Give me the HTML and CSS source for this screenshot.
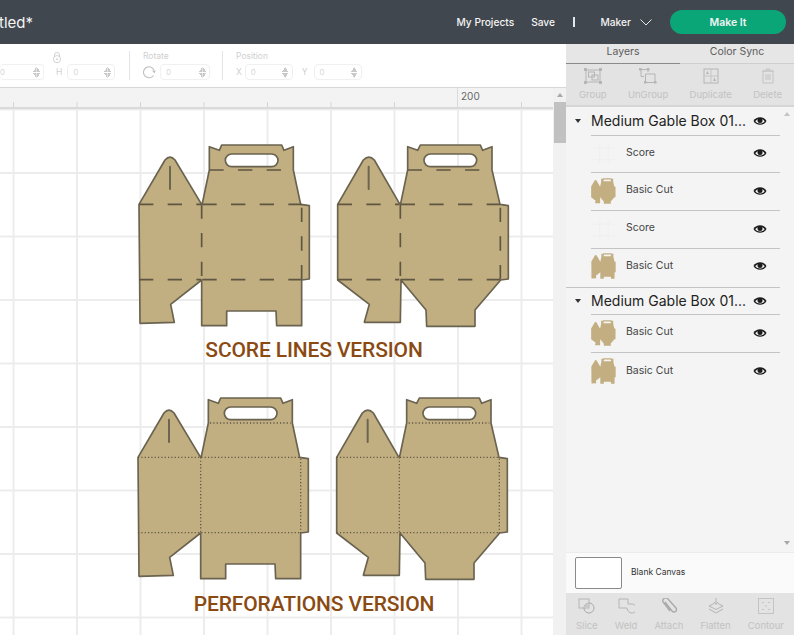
FILE: index.html
```html
<!DOCTYPE html>
<html lang="en">
<head>
<meta charset="utf-8">
<title>Untitled*</title>
<link rel="stylesheet" href="styles.css">
</head>
<body>
<svg class="defs" width="0" height="0" aria-hidden="true">
  <defs>
    <symbol id="flat" viewBox="0 0 570 600">
      <path fill-rule="evenodd" d="M27 208L105 75Q120 58 135 75L213 205L217 205L238 105L238 35L268 46L275 30L455 30L462 46L490 35L490 105L512 208L538 212L538 432L515 435L515 572L440 572L438 528L290 528L290 572L215 572L215 435L122 508L133 562L30 565ZM305 57L425 57A19 19 0 0 1 425 95L305 95A19 19 0 0 1 305 57Z"/>
    </symbol>
    <symbol id="hex" viewBox="0 0 570 600">
      <path fill-rule="evenodd" d="M23 208L100 75Q117 58 133 75L208 205L212 205L233 105L233 35L263 46L271 30L451 30L458 46L486 35L486 105L510 208L535 212L535 432L512 435L435 525L435 574L290 574L288 525L213 435L211 562L103 562L118 508L23 435ZM301 57L421 57A19 19 0 0 1 421 95L301 95A19 19 0 0 1 301 57Z"/>
    </symbol>
    <symbol id="eye" viewBox="0 0 14 12">
      <path d="M.5 6C3 1 11 1 13.500 6C11 11 3 11 .5 6Z" fill="#1d1d1d"/>
      <path d="M2.300 6.200C4.500 3.300 9.500 3.300 11.700 6.200C9.500 9.200 4.500 9.200 2.300 6.200Z" fill="#f4f4f4"/>
      <circle cx="7" cy="5.600" r="2.500" fill="#1d1d1d"/>
    </symbol>
    <symbol id="score" viewBox="0 0 26 26">
      <path d="M1 8H25M1 20H25M9 3V24M18 3V24" fill="none" stroke="#efefef"/>
    </symbol>
  </defs>
</svg>

<header class="topbar">
  <div class="title"><span>Untitled*</span></div>
  <nav class="nav">
    <a class="nav-link">My Projects</a>
    <a class="nav-link nav-save">Save</a>
    <span class="nav-sep"></span>
    <a class="nav-link nav-maker">Maker</a>
    <svg class="chevron" viewBox="0 0 12 7"><path d="M.5 .5L6 6L11.500 .5" fill="none" stroke="#e8e8e8" stroke-width="1"/></svg>
    <button class="make-it">Make It</button>
  </nav>
</header>

<div class="main">
  <section class="workspace">
    <div class="toolbar">
      <div class="tgroup tgroup-size">
        <div class="tlabel tlabel-lock">
          <svg class="lock" viewBox="0 0 12 14"><path d="M3 6V4A3 3 0 0 1 9 4V6" fill="none" stroke="#c9c9c9"/><circle cx="6" cy="9" r="4.300" fill="none" stroke="#c9c9c9"/><circle cx="6" cy="9" r="1" fill="#c9c9c9"/></svg>
        </div>
        <div class="trow">
          <div class="field field-w"><span class="val">0</span><span class="spin"></span></div>
          <span class="axis axis-h">H</span>
          <div class="field"><span class="val">0</span><span class="spin"></span></div>
        </div>
      </div>
      <div class="tgroup tgroup-rotate">
        <div class="tlabel">Rotate</div>
        <div class="trow">
          <svg class="rotate" viewBox="0 0 13 13"><path d="M10.500 9.500A5.500 5.500 0 1 1 11 4" fill="none" stroke="#bdbdbd" stroke-width="1.100"/><path d="M9 4.500L12.700 4.500L11.500 7.500Z" fill="#bdbdbd"/></svg>
          <div class="field field-rot"><span class="val">0</span><span class="spin"></span></div>
        </div>
      </div>
      <div class="tgroup tgroup-pos">
        <div class="tlabel">Position</div>
        <div class="trow">
          <span class="axis axis-x">X</span>
          <div class="field field-x"><span class="val">0</span><span class="spin"></span></div>
          <span class="axis axis-y">Y</span>
          <div class="field"><span class="val">0</span><span class="spin"></span></div>
        </div>
      </div>
    </div>
    <div class="stage">
      <div class="stage-main">
        <div class="ruler"><span class="ruler-mark">200</span></div>
        <div class="canvas">
          <div class="box box-a">
            <svg viewBox="0 0 570 600">
              <use href="#flat" class="outline" width="570" height="600"/>
              <path class="slit" d="M120 95V162"/>
              <path class="dash" d="M27 208H213M217 208H515M27 434H213M217 434H515M238 105H490"/>
              <path class="dash" d="M215 208V435M515 218V435"/>
            </svg>
          </div>
          <div class="box box-b">
            <svg viewBox="0 0 570 600">
              <use href="#hex" class="outline" width="570" height="600"/>
              <path class="slit" d="M116 95V162"/>
              <path class="dash" d="M23 208H208M212 208H510M23 434H208M212 434H510M233 105H486"/>
              <path class="dash" d="M211 208V435M511 218V435"/>
            </svg>
          </div>
          <p class="caption caption-score">SCORE LINES VERSION</p>
          <div class="box box-c">
            <svg viewBox="0 0 570 600">
              <use href="#flat" class="outline" width="570" height="600"/>
              <path class="slit" d="M120 95V162"/>
              <path class="dots" d="M27 208H515M27 434H515M243 105H485M215 208V435M515 212V435"/>
            </svg>
          </div>
          <div class="box box-d">
            <svg viewBox="0 0 570 600">
              <use href="#hex" class="outline" width="570" height="600"/>
              <path class="slit" d="M116 95V162"/>
              <path class="dots" d="M23 208H510M23 434H510M239 105H481M211 208V435M511 212V435"/>
            </svg>
          </div>
          <p class="caption caption-perf">PERFORATIONS VERSION</p>
        </div>
      </div>
      <div class="vscroll">
        <span class="arrow-up"></span>
        <span class="thumb"></span>
      </div>
    </div>
  </section>

  <aside class="panel">
    <div class="tabs">
      <div class="tab tab-active">Layers</div>
      <div class="tab">Color Sync</div>
    </div>
    <div class="tools tools-top">
      <div class="tool">
        <svg viewBox="0 0 18 16"><rect x="2" y="2" width="14" height="12" fill="none" stroke="#b5b5b5"/><rect x="4.500" y="4" width="6" height="5" fill="none" stroke="#b5b5b5"/><rect x="8" y="7" width="6" height="5" fill="none" stroke="#b5b5b5"/><path d="M0 0h3v3H0zM15 0h3v3h-3zM0 13h3v3H0zM15 13h3v3h-3z" fill="#b5b5b5"/></svg>
        <span>Group</span>
      </div>
      <div class="tool">
        <svg viewBox="0 0 18 16"><path d="M2 1.500H9V4M2 1.500V8.500H5M6.500 6H16V14.500H6.500Z" fill="none" stroke="#b5b5b5"/><path d="M0 0h2.500v2.500H0zM8 0h2.500v2.500H8zM15 13h2.500v2.500H15zM5 13h2.500v2.500H5z" fill="#b5b5b5"/></svg>
        <span>UnGroup</span>
      </div>
      <div class="tool">
        <svg viewBox="0 0 18 16"><rect x="2" y="1" width="14" height="14" fill="none" stroke="#b5b5b5"/><path d="M9 1V15M2 8H16" stroke="#c5c5c5"/><path d="M5.500 3L7 6L4 6ZM12.500 9.500L14 13L11 13Z" fill="#b5b5b5"/></svg>
        <span>Duplicate</span>
      </div>
      <div class="tool">
        <svg viewBox="0 0 18 16"><path d="M4 3H14V15H4ZM3 3H15M7 3V1H11V3M7 6V12M9 6V12M11 6V12" fill="none" stroke="#c4c4c4"/></svg>
        <span>Delete</span>
      </div>
    </div>

    <div class="layers">
      <div class="layers-list">
        <div class="group-row">
          <span class="caret"></span><span class="group-name">Medium Gable Box 01...</span>
          <svg class="eye"><use href="#eye"/></svg>
        </div>
        <div class="layer-row">
          <svg class="thumb-img"><use href="#score"/></svg><span class="layer-name">Score</span>
          <svg class="eye"><use href="#eye"/></svg>
        </div>
        <div class="layer-row layer-row-38">
          <svg class="thumb-img thumb-fill" viewBox="20 25 525 552" preserveAspectRatio="none"><use href="#hex" width="570" height="600"/></svg><span class="layer-name">Basic Cut</span>
          <svg class="eye"><use href="#eye"/></svg>
        </div>
        <div class="layer-row layer-row-38">
          <svg class="thumb-img"><use href="#score"/></svg><span class="layer-name">Score</span>
          <svg class="eye"><use href="#eye"/></svg>
        </div>
        <div class="layer-row layer-row-last">
          <svg class="thumb-img thumb-fill" viewBox="20 25 525 552" preserveAspectRatio="none"><use href="#flat" width="570" height="600"/></svg><span class="layer-name">Basic Cut</span>
          <svg class="eye"><use href="#eye"/></svg>
        </div>
        <div class="group-row group-row-2">
          <span class="caret"></span><span class="group-name">Medium Gable Box 01...</span>
          <svg class="eye"><use href="#eye"/></svg>
        </div>
        <div class="layer-row layer-row-38">
          <svg class="thumb-img thumb-fill" viewBox="20 25 525 552" preserveAspectRatio="none"><use href="#hex" width="570" height="600"/></svg><span class="layer-name">Basic Cut</span>
          <svg class="eye"><use href="#eye"/></svg>
        </div>
        <div class="layer-row layer-row-38 layer-row-end">
          <svg class="thumb-img thumb-fill" viewBox="20 25 525 552" preserveAspectRatio="none"><use href="#flat" width="570" height="600"/></svg><span class="layer-name">Basic Cut</span>
          <svg class="eye"><use href="#eye"/></svg>
        </div>
      </div>
      <div class="layers-scroll">
        <span class="arrow-up arrow-light"></span>
        <span class="arrow-down"></span>
      </div>
    </div>

    <div class="blank">
      <div class="swatch"></div>
      <span class="blank-label">Blank Canvas</span>
    </div>

    <div class="tools tools-bottom">
      <div class="tool">
        <svg viewBox="0 0 18 16"><rect x="1" y="1" width="10" height="9" fill="none" stroke="#b5b5b5"/><circle cx="11" cy="10" r="5" fill="none" stroke="#a9a9a9"/><path d="M6 10A5 5 0 0 1 11 5V10Z" fill="#c9c9c9"/></svg>
        <span>Slice</span>
      </div>
      <div class="tool">
        <svg viewBox="0 0 18 16"><path d="M2 1H11V6H15A3.500 3.500 0 0 1 15 15C12 15 10.500 13 10 10H2Z" fill="none" stroke="#b5b5b5"/></svg>
        <span>Weld</span>
      </div>
      <div class="tool">
        <svg viewBox="0 0 18 16"><path d="M5 4L12 13A2.500 2.500 0 0 0 16 10L8 1A2.800 2.800 0 0 0 3.500 4.500L10 13" fill="none" stroke="#aaa" stroke-width="1.400"/></svg>
        <span>Attach</span>
      </div>
      <div class="tool">
        <svg viewBox="0 0 18 16"><path d="M9 0V6M7 4L9 6.500L11 4M2 8L7 5.500M16 8L11 5.500M2 8L9 11.500L16 8M2 11L9 15L16 11" fill="none" stroke="#b5b5b5"/></svg>
        <span>Flatten</span>
      </div>
      <div class="tool">
        <svg viewBox="0 0 18 16"><rect x="1.500" y=".5" width="15" height="15" fill="none" stroke="#c4c4c4"/><path d="M5 4h2v1H5zM11 4h2v1h-2zM5 11h2v1H5zM11 11h2v1h-2zM8.500 7h1v2h-1z" fill="#c4c4c4"/></svg>
        <span>Contour</span>
      </div>
    </div>
  </aside>
</div>
</body>
</html>
```

FILE: styles.css
```css
* { box-sizing: border-box; }
html, body { margin: 0; padding: 0; }
body {
  width: 794px;
  height: 635px;
  overflow: hidden;
  font-family: Inter, "Open Sans", sans-serif;
  background: #fff;
  display: flex;
  flex-direction: column;
}
.defs { position: absolute; }

/* top bar */
.topbar {
  height: 44px;
  flex: none;
  background: #41474f;
  display: flex;
  align-items: center;
  justify-content: space-between;
  color: #fff;
}
.title {
  width: 33px;
  overflow: hidden;
  display: flex;
  justify-content: flex-end;
  font-size: 15px;
  white-space: nowrap;
  color: #f4f4f4;
}
.nav { display: flex; align-items: center; }
.nav-link { font-size: 10.200px; font-weight: 500; color: #f4f4f4; }
.nav-save { margin-left: 17px; }
.nav-sep { width: 1.500px; height: 10px; background: #e4e6ef; margin-left: 18px; }
.nav-maker { margin-left: 26px; }
.chevron { width: 12px; height: 7px; margin-left: 9px; }
.make-it {
  width: 116px;
  height: 24px;
  margin: 0 8px 0 18px;
  padding: 0;
  border: 0;
  border-radius: 12px;
  background: #0ba678;
  color: #f2f2f2;
  font: 600 10.500px Inter, sans-serif;
}

.main { flex: 1; display: flex; min-height: 0; }

/* workspace */
.workspace { width: 566px; flex: none; display: flex; flex-direction: column; }
.toolbar {
  height: 44px;
  flex: none;
  border-bottom: 1.500px solid #d8d8d8;
  display: flex;
  align-items: stretch;
  padding-top: 7px;
  background: #fff;
}
.tgroup { height: 29px; display: flex; flex-direction: column; justify-content: space-between; }
.tgroup-size { width: 130px; border-right: 1px solid #e4e4e4; }
.tgroup-rotate { width: 93px; padding-left: 13px; border-right: 1px solid #e4e4e4; }
.tgroup-pos { padding-left: 13px; }
.tlabel { font-size: 8.500px; color: #cfcfcf; height: 11px; line-height: 11px; }
.tlabel-lock { padding-left: 52px; height: 11px; }
.lock { width: 10px; height: 13px; display: block; margin-top: 0; }
.trow { display: flex; align-items: center; height: 16px; }
.field {
  width: 48px;
  height: 16px;
  border: 1px solid #f0f0f0;
  border-radius: 4px;
  display: flex;
  align-items: center;
  justify-content: space-between;
  padding: 0 3px 0 5px;
  font-size: 8px;
  color: #d8d8d8;
}
.field-w { width: 44px; border-left: 0; padding-left: 0; justify-content: space-between; }
.field-rot { width: 50px; }
.spin {
  width: 7px;
  height: 11px;
  background:
    linear-gradient(to bottom right, transparent 50%, #c9c9c9 50%) 0 0 / 3.500px 5px no-repeat,
    linear-gradient(to bottom left, transparent 50%, #c9c9c9 50%) 3.500px 0 / 3.500px 5px no-repeat,
    linear-gradient(to top right, transparent 50%, #c9c9c9 50%) 0 6px / 3.500px 5px no-repeat,
    linear-gradient(to top left, transparent 50%, #c9c9c9 50%) 3.500px 6px / 3.500px 5px no-repeat;
}
.axis { font-size: 8.500px; color: #cfcfcf; }
.axis-h { margin: 0 5px 0 12px; }
.axis-x { margin-right: 3px; }
.field-x { margin-right: 9px; }
.axis-y { margin-right: 6px; }
.rotate { width: 13px; height: 13px; margin-right: 4px; }

.stage { flex: 1; display: flex; min-height: 0; }
.stage-main { width: 553px; flex: none; display: flex; flex-direction: column; }
.ruler {
  height: 21px;
  flex: none;
  background-color: #f3f3f3;
  background-image: linear-gradient(to right, #d4d4d4 1px, transparent 1px);
  background-size: 63.500px 5px;
  background-position: 13px 100%;
  background-repeat: repeat-x;
  border-bottom: 2px solid #dadada;
  display: flex;
}
.ruler-mark {
  margin-left: 457px;
  padding: 2px 0 0 3px;
  border-left: 1px solid #dadada;
  font-size: 10px;
  color: #666;
  background: #f3f3f3;
}
.canvas {
  flex: 1;
  position: relative;
  overflow: hidden;
  background-color: #fff;
  background-image:
    linear-gradient(to right, #ececec 2px, transparent 2px),
    linear-gradient(to bottom, #ececec 2px, transparent 2px);
  background-size: 63.500px 63.500px;
  background-position: 12.500px -0.500px;
}
.box { position: absolute; width: 190px; height: 200px; }
.box svg { display: block; width: 190px; height: 200px; }
.box-a { left: 130px; top: 26px; }
.box-b { left: 330px; top: 26px; }
.box-c { left: 129px; top: 279px; }
.box-d { left: 329px; top: 279px; }
.outline { fill: #c1ae81; stroke: #6a6350; stroke-width: 5; stroke-linejoin: round; }
.slit { fill: none; stroke: #6e6550; stroke-width: 6; stroke-linecap: round; }
.dash { fill: none; stroke: #5f5642; stroke-width: 5; stroke-dasharray: 43 43; }
.dots { fill: none; stroke: #5f5642; stroke-width: 4; stroke-dasharray: 3.500 6.500; }
.caption {
  position: absolute;
  left: 64px;
  width: 500px;
  margin: 0;
  text-align: center;
  font: 500 21px Roboto, sans-serif;
  letter-spacing: -0.130px;
  line-height: 24px;
  color: #8a4a12;
  white-space: nowrap;
}
.caption-score { top: 229px; }
.caption-perf { top: 483px; }

.vscroll {
  width: 13px;
  flex: none;
  background: #f1f1f1;
  display: flex;
  flex-direction: column;
  align-items: center;
  padding-top: 5px;
}
.arrow-up {
  width: 0;
  height: 0;
  border: 3.500px solid transparent;
  border-top: 0;
  border-bottom: 4px solid #a8a8a8;
}
.thumb { width: 12px; height: 41px; margin-top: 5px; background: #c1c1c1; }

/* panel */
.panel {
  width: 228px;
  flex: none;
  display: flex;
  flex-direction: column;
  background: #f4f4f4;
}
.tabs { height: 20px; flex: none; display: flex; background: #e6e6e6; border-bottom: 1px solid #cfcfcf; }
.tab { flex: 1; text-align: center; font-size: 10.500px; line-height: 16px; color: #5c5c5c; }
.tab-active { border-bottom: 1px solid #8a8a8a; margin-bottom: -1px; }
.tools { flex: none; display: flex; justify-content: space-between; background: #e3e3e3; color: #c2c2c2; }
.tools-top { height: 43px; padding: 4px 12px 0 13px; border-bottom: 2px solid #d6d6d6; }
.tools-bottom { height: 42px; padding: 5px 10px 0; }
.tool { display: flex; flex-direction: column; align-items: center; font-size: 9.500px; line-height: 12px; }
.tool svg { width: 18px; height: 16px; margin-bottom: 5px; }
.tools-bottom .tool svg { margin-bottom: 6px; }

.layers { flex: 1; display: flex; min-height: 0; background: #f4f4f4; }
.layers-list { width: 214px; flex: none; }
.group-row {
  height: 29px;
  display: flex;
  align-items: center;
  padding: 0 0 2px 9px;
  position: relative;
}
.group-row::after {
  content: "";
  position: absolute;
  left: 25px;
  right: 0;
  bottom: 0;
  height: 1px;
  background: #c4c4c4;
}
.group-row-2 { height: 27px; }
.caret {
  width: 0;
  height: 0;
  border: 3.500px solid transparent;
  border-bottom: 0;
  border-top: 4px solid #333;
  margin-right: 9px;
  flex: none;
}
.group-name { font-size: 14px; color: #222; margin-left: 1px; white-space: nowrap; }
.eye { width: 14px; height: 12px; flex: none; margin-left: auto; margin-right: 13px; }
.layer-row {
  height: 37px;
  margin-left: 25px;
  display: flex;
  align-items: center;
  border-bottom: 1px solid #c4c4c4;
  padding-bottom: 2px;
}
.layer-row-38 { height: 38px; }
.layer-row-last { height: 39px; margin-left: 0; padding: 0 0 4px 25px; }
.layer-row-end { border-bottom: 0; }
.thumb-img { width: 25px; height: 26px; flex: none; }
.thumb-fill { fill: #c2ae80; }
.layer-name { font-size: 10.500px; color: #444; margin: 0 0 2px 10px; }
.layers-scroll {
  flex: 1;
  display: flex;
  flex-direction: column;
  justify-content: space-between;
  align-items: center;
  padding: 5px 0 7px;
}
.arrow-light { border-bottom-color: #c4c4c4; }
.arrow-down {
  width: 0;
  height: 0;
  border: 3.500px solid transparent;
  border-bottom: 0;
  border-top: 4px solid #a8a8a8;
}

.blank {
  height: 41px;
  flex: none;
  display: flex;
  align-items: center;
  padding-left: 9px;
  background: #fafafa;
  border-top: 1px solid #ececec;
}
.swatch { width: 47px; height: 32px; background: #fff; border: 1px solid #8a8a8a; border-radius: 2px; }
.blank-label { font-size: 8.500px; color: #333; margin: 0 0 2px 9px; }
```
